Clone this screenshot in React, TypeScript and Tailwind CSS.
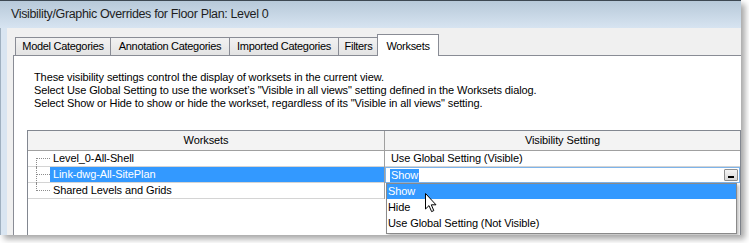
import React from 'react';

const tabs = [
  { label: 'Model Categories', cls: 'w-[96px]' },
  { label: 'Annotation Categories', cls: 'w-[120px]' },
  { label: 'Imported Categories', cls: 'w-[110px]' },
  { label: 'Filters', cls: 'w-[41px]' },
];

const worksets = ['Level_0-All-Shell', 'Link-dwg-All-SitePlan', 'Shared Levels and Grids'];

function Cursor() {
  return (
    <svg className="absolute left-[38px] top-[9px]" width="13" height="20" viewBox="0 0 13 20">
      <path
        d="M0.5 0.5 L0.5 16 L4 12.6 L6.6 18.6 L8.8 17.6 L6.3 11.8 L11 11.8 Z"
        fill="#fff"
        stroke="#000"
        strokeWidth="1"
        strokeLinejoin="miter"
      />
    </svg>
  );
}

export default function App() {
  return (
    <div className="w-[749px] h-[243px] bg-white font-['Liberation_Sans',Arial,sans-serif] text-[11px] text-black tracking-[-0.1px]">
      {/* Window */}
      <div className="w-[741px] h-[235px] overflow-hidden flex flex-col border-t border-[#3d4852] shadow-[4px_4px_6px_rgba(0,0,0,0.35)]">
        {/* Title bar */}
        <div className="h-[27px] shrink-0 flex items-center pl-[11px] bg-gradient-to-b from-[#b7c9d9] to-[#d7e4f1] text-[12.5px] text-[#1e1e1e] tracking-[-0.35px]">
          Visibility/Graphic Overrides for Floor Plan: Level 0
        </div>

        <div className="flex flex-1 min-h-0">
          {/* Frame strip */}
          <div className="w-[7px] shrink-0 bg-[#d9e5f1] border-l border-[#9fb0c0]" />

          {/* Client area */}
          <div className="flex-1 bg-[#f0f0f0] pt-[7px] pl-[6px] flex flex-col min-w-0">
            {/* Tabs */}
            <div className="flex items-end h-[20px] pl-[2px] relative z-10 tracking-[-0.3px]">
              {tabs.map((t) => (
                <div
                  key={t.label}
                  className={`${t.cls} h-[18px] -mr-[1px] flex items-center justify-center border border-b-0 border-[#898c95] bg-gradient-to-b from-[#f2f2f2] to-[#e3e3e3] whitespace-nowrap`}
                >
                  {t.label}
                </div>
              ))}
              <div className="w-[62px] h-[22px] -mb-[1px] -ml-[1px] flex items-start pt-[3px] justify-center border border-b-0 border-[#898c95] bg-white whitespace-nowrap">
                Worksets
              </div>
            </div>

            {/* Tab panel */}
            <div className="w-[760px] flex-1 border border-[#898c95] bg-white pt-[15px]">
              <div className="pl-[20px] leading-[13px] whitespace-nowrap">
                <p>These visibility settings control the display of worksets in the current view.</p>
                <p>Select Use Global Setting to use the workset’s "Visible in all views" setting defined in the Worksets dialog.</p>
                <p>Select Show or Hide to show or hide the workset, regardless of its "Visible in all views" setting.</p>
              </div>

              {/* Table */}
              <div className="ml-[13px] mt-[20px] w-[714px] h-[110px] border border-[#828790] bg-white">
                <div className="flex h-[20px] border-b border-[#a0a0a0] bg-[#f3f3f3]">
                  <div className="w-[357px] flex items-center justify-center border-r border-[#a0a0a0]">Worksets</div>
                  <div className="flex-1 flex items-center justify-center">Visibility Setting</div>
                </div>

                <div className="flex">
                  {/* Worksets column */}
                  <div className="w-[357px] border-r border-[#a0a0a0]">
                    {worksets.map((name, i) => (
                      <div key={name} className="flex h-[16px] border-b border-[#d4d4d4]">
                        <div className="relative w-[22px] shrink-0">
                          <span
                            className={`absolute left-[8px] w-0 border-l border-dotted border-[#8c8c8c] ${
                              i === 0 ? 'top-[7px] bottom-[-1px]' : i === 2 ? 'top-0 h-[8px]' : 'top-0 bottom-[-1px]'
                            }`}
                          />
                          <span className="absolute left-[8px] right-0 top-[7px] h-0 border-t border-dotted border-[#8c8c8c]" />
                        </div>
                        <div
                          className={`flex-1 flex items-center pl-[3px] ${
                            i === 1 ? 'bg-[#3399ff] text-white' : ''
                          }`}
                        >
                          {name}
                        </div>
                      </div>
                    ))}
                  </div>

                  {/* Visibility column */}
                  <div className="flex-1 relative">
                    <div className="h-[16px] flex items-center pl-[6px] border-b border-[#d4d4d4]">
                      Use Global Setting (Visible)
                    </div>
                    <div className="h-[16px] flex items-center border border-[#7eb4ea] pl-[4px] pr-[1px]">
                      <span className="bg-[#3399ff] text-white px-[1px] leading-[13px]">Show</span>
                      <div className="ml-auto w-[14px] h-[12px] border border-[#8f8f8f] rounded-[1px] bg-gradient-to-b from-[#f4f4f4] to-[#d9d9d9] flex items-end justify-center pb-[2px]">
                        <span className="w-[6px] h-[2px] bg-black" />
                      </div>
                    </div>

                    {/* Open dropdown list */}
                    <div className="absolute left-[1px] top-[32px] w-[351px] h-[51px] border border-[#8a8a8a] bg-white shadow-[2px_2px_3px_rgba(0,0,0,0.25)]">
                      <div className="h-[15px] flex items-center pl-[1px] bg-[#3399ff] text-white">Show</div>
                      <div className="h-[16px] flex items-center pl-[1px]">Hide</div>
                      <div className="h-[16px] flex items-center pl-[1px]">Use Global Setting (Not Visible)</div>
                      <Cursor />
                    </div>
                  </div>
                </div>
              </div>
            </div>
          </div>
        </div>
      </div>
    </div>
  );
}
